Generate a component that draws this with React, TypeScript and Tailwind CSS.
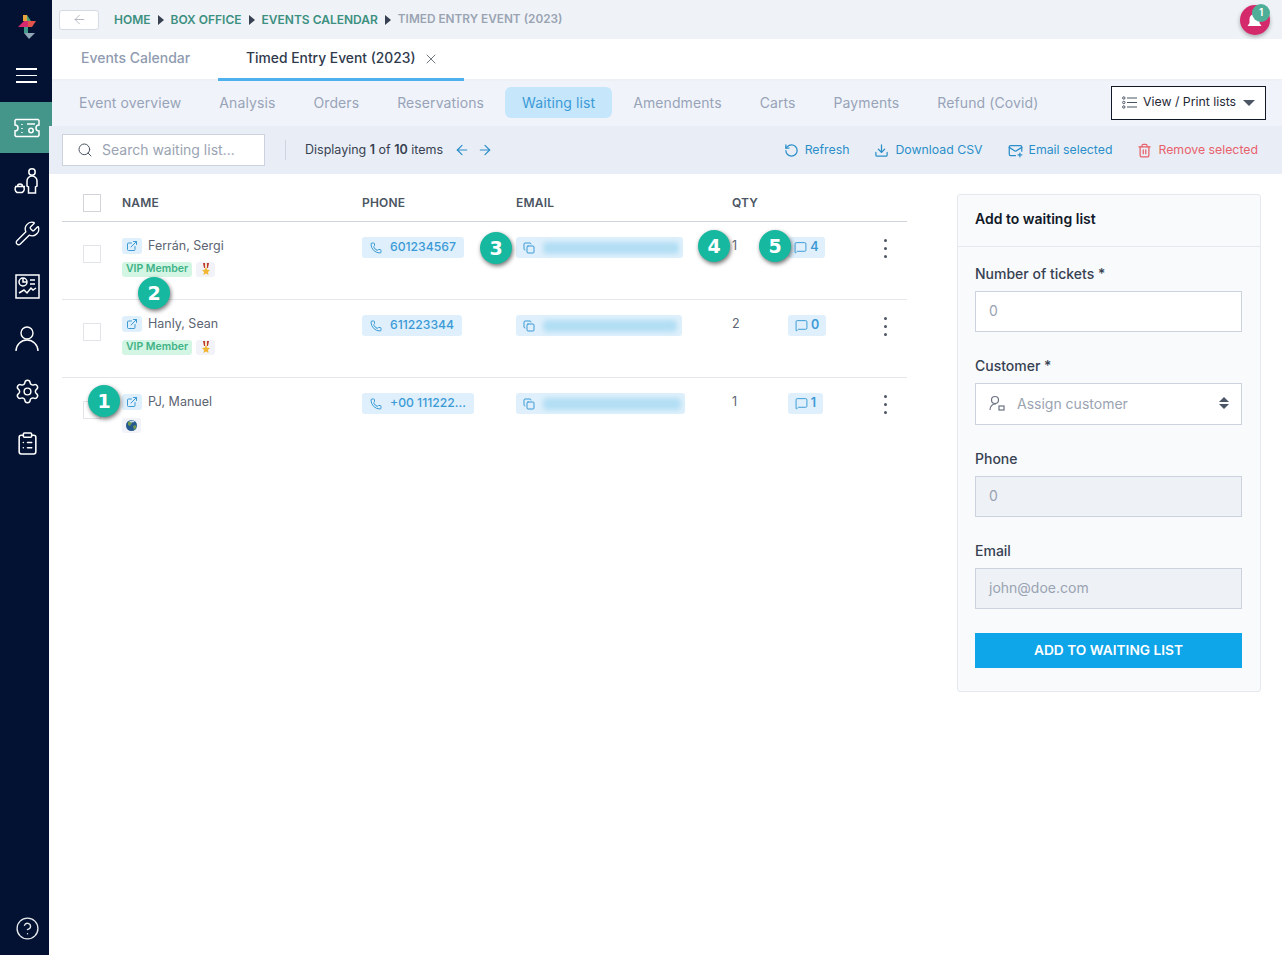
import {
    ArrowLeft, ArrowRight, CircleHelp, ClipboardList, Copy, Download, ExternalLink, MailPlus, MessageSquare,
    Phone, RotateCcw, Search, Settings, Trash2, Wrench, X,
} from "lucide-react";
import type {ReactNode} from "react";

const subTabs = ["Event overview", "Analysis", "Orders", "Reservations", "Waiting list", "Amendments", "Carts", "Payments", "Refund (Covid)"];

const rows = [
    {name: "Ferrán, Sergi", vip: true, phone: "601234567", blur: "w-[136px]", chip: "w-[167px]", qty: "1", notes: "4", noteChip: "w-[37px]"},
    {name: "Hanly, Sean", vip: true, phone: "611223344", blur: "w-[134px]", chip: "w-[166px]", qty: "2", notes: "0", noteChip: "w-[38px]"},
    {name: "PJ, Manuel", vip: false, phone: "+00 111222...", blur: "w-[138px]", chip: "w-[169px]", qty: "1", notes: "1", noteChip: "w-[35px]"},
];

function Logo() {
    return (
        <svg width="18" height="24" viewBox="0 0 18 24">
            <path d="M5 0h4v6H5z" fill="#e8a33d"/>
            <path d="M9 0l4 6H9z" fill="#4f9f6e"/>
            <path d="M0 12l6-6h4v6z" fill="#d6296f"/>
            <path d="M10 6h8l-4 6h-4z" fill="#e0524a"/>
            <path d="M6 12h4v6H6z" fill="#3f9a8a"/>
            <path d="M6 18h11l-6 6z" fill="#8fa6b5"/>
        </svg>
    );
}

function TicketIcon() {
    return (
        <svg width="26" height="20" viewBox="0 0 26 20" fill="none" stroke="white" strokeWidth="1.5">
            <path d="M2 1.500h22l1 1v4.500a3 3 0 0 0 0 6v4.500l-1 1h-22l-1-1v-4.500a3 3 0 0 0 0-6v-4.500z"/>
            <path d="M8 6v1M8 10v1M8 14v1M13 6h8"/>
            <circle cx="17" cy="12.500" r="2.200"/>
        </svg>
    );
}

function CustomerIcon() {
    return (
        <svg width="26" height="26" viewBox="0 0 26 26" fill="none" stroke="white" strokeWidth="1.500">
            <circle cx="18" cy="4" r="3.200"/>
            <path d="M14.500 25v-6l-1.500-1v-5a5 5 0 0 1 10 0v5l-1.500 1v6z"/>
            <path d="M1 18.500h10M2 18.500a4 4 0 0 0 1 6h5a4 4 0 0 0 1.500-6M3.500 18.500a2.500 2.500 0 0 1 5 0"/>
        </svg>
    );
}

function ReportIcon() {
    return (
        <svg width="25" height="25" viewBox="0 0 25 25" fill="none" stroke="white" strokeWidth="1.500">
            <rect x="1" y="1" width="23" height="23"/>
            <circle cx="8" cy="8" r="4"/>
            <path d="M8 4v4h4M15 6h5M15 10h5M4 19l5-3 3 3 4-5 2 2 3-2"/>
        </svg>
    );
}

function PersonIcon() {
    return (
        <svg width="24" height="26" viewBox="0 0 24 26" fill="none" stroke="white" strokeWidth="1.400">
            <circle cx="12" cy="7" r="6"/>
            <path d="M1 25a11 11 0 0 1 22 0"/>
        </svg>
    );
}

function AssignIcon() {
    return (
        <svg width="16" height="16" viewBox="0 0 16 16" fill="none" stroke="#6b7280" strokeWidth="1.200">
            <circle cx="6" cy="5" r="3.500"/>
            <path d="M1 15a5.500 5.500 0 0 1 6-6"/>
            <rect x="10" y="11" width="5" height="4"/>
        </svg>
    );
}

function Medal() {
    return (
        <svg width="10" height="12" viewBox="0 0 10 12">
            <path d="M2 0h6l-1 5H3z" fill="#c0392b"/>
            <path d="M4 0h2v5H4z" fill="#f0e4d0"/>
            <path d="M5 4l1.300 2.700 2.700.300-2 2 .5 3L5 10.500 2.500 12l.5-3-2-2 2.700-.300z" fill="#f2b632"/>
        </svg>
    );
}

function Globe() {
    return (
        <svg width="11" height="11" viewBox="0 0 11 11">
            <circle cx="5.500" cy="5.500" r="5.500" fill="#24598f"/>
            <path d="M2 2l3-1 1 2-2 3-2-1zM7 6l3-1 0 3-2 2z" fill="#6d9a4f"/>
            <path d="M3 1l4-.5 2 1.500-4 .5z" fill="#c8dbe6"/>
        </svg>
    );
}

function Marker({n, className}: {n: number; className: string}) {
    return (
        <div className={`absolute z-10 flex h-[32px] w-[32px] items-center justify-center rounded-full bg-[#17b8a0] font-['DejaVu_Sans',sans-serif] text-[19px] font-bold text-white shadow-[1px_2px_4px_rgba(0,0,0,0.55)] ${className}`}>
            {n}
        </div>
    );
}

function SideItem({children}: {children: ReactNode}) {
    return <div className="flex h-[52.500px] w-[49px] items-center justify-center pl-[5px]">{children}</div>;
}

function Crumb({label}: {label: string}) {
    return (
        <>
            <span>{label}</span>
            <span className="h-0 w-0 border-y-[5px] border-l-[6px] border-y-transparent border-l-[#374151]"/>
        </>
    );
}

function Action({icon, label, className}: {icon: ReactNode; label: string; className: string}) {
    return (
        <div className={`flex items-center gap-[6px] text-[12.300px] ${className}`}>
            {icon}
            {label}
        </div>
    );
}

function Field({label, value, disabled}: {label: string; value: string; disabled?: boolean}) {
    return (
        <div>
            <div className="mb-[10px] text-[14px] leading-[15px] font-medium text-[#374151]">{label}</div>
            <div className={`flex h-[41px] items-center border border-[#ccd3de] pb-[2px] pl-[13px] text-[14px] text-[#9aa3b2] ${disabled ? "bg-[#eef1f6]" : "bg-white"}`}>
                {value}
            </div>
        </div>
    );
}

export default function App() {
    return (
        <div className="flex h-[958px] w-[1282px] overflow-hidden bg-white font-[family-name:Inter,sans-serif]">
            {/* sidebar */}
            <div className="flex h-[955px] w-[49px] shrink-0 flex-col bg-[#031233]">
                <div className="flex h-[51px] w-[52px] items-center justify-center bg-[#031233] pl-[1px] pt-[2px]">
                    <Logo/>
                </div>
                <div className="flex h-[51px] w-[52px] flex-col items-center justify-center gap-[5px] bg-[#031233] pl-[1px] pb-[2px]">
                    <div className="h-[1.500px] w-[21px] bg-white"/>
                    <div className="h-[1.500px] w-[21px] bg-white"/>
                    <div className="h-[1.500px] w-[21px] bg-white"/>
                </div>
                <div className="flex h-[51px] w-[52px] items-center justify-center bg-[#45968a] pl-[1px]">
                    <TicketIcon/>
                </div>
                <div className="mt-[2px]">
                    <SideItem><CustomerIcon/></SideItem>
                    <SideItem><Wrench size={27} color="white" strokeWidth={1.2}/></SideItem>
                    <SideItem><ReportIcon/></SideItem>
                    <SideItem><PersonIcon/></SideItem>
                    <SideItem><Settings size={27} color="white" strokeWidth={1.3}/></SideItem>
                    <SideItem><ClipboardList size={25} color="white" strokeWidth={1.5}/></SideItem>
                </div>
                <div className="mt-auto flex h-[54px] items-center justify-center pl-[5px]">
                    <CircleHelp size={25} color="#e5e7eb" strokeWidth={1.3}/>
                </div>
            </div>

            <div className="flex min-w-0 flex-1 flex-col">
                {/* breadcrumb */}
                <div className="ml-[3px] flex h-[39px] items-center bg-[#eff3f8] pl-[7px] pr-[12px]">
                    <div className="flex h-[20px] w-[40px] items-center justify-center rounded-[3px] border border-[#d5dae3] bg-white">
                        <ArrowLeft size={15} color="#9ca3af" strokeWidth={1.2}/>
                    </div>
                    <div className="ml-[15px] flex items-center gap-[7px] pt-[1px] text-[12px] font-semibold text-[#3d8f80]">
                        <Crumb label="HOME"/>
                        <Crumb label="BOX OFFICE"/>
                        <Crumb label="EVENTS CALENDAR"/>
                        <span className="text-[11.800px] text-[#9aa3b2]">TIMED ENTRY EVENT (2023)</span>
                    </div>
                    <div className="relative ml-auto h-[30px] w-[30px] rounded-full bg-[#d42a6c] shadow-[0_2px_4px_rgba(0,0,0,0.3)]">
                        <svg className="absolute left-[7px] top-[9px]" width="15" height="16" viewBox="0 0 15 16" fill="white">
                            <path d="M7.500 0a5 5 0 0 1 5 5v4l2 3h-14l2-3v-4a5 5 0 0 1 5-5z"/>
                        </svg>
                        <div className="absolute left-[12px] top-[-1px] flex h-[18px] w-[18px] items-center justify-center rounded-full bg-[#4fae97] text-[10px] font-semibold text-white">1</div>
                    </div>
                </div>

                {/* page tabs */}
                <div className="ml-[3px] flex h-[42px] border-b-2 border-[#edf0f5] bg-white">
                    <div className="flex w-[166px] items-center pl-[29px] pb-[3px] text-[14px] font-medium text-[#8f9bb0]">Events Calendar</div>
                    <div className="-mb-[2px] flex w-[246px] items-center gap-[7px] border-b-[3px] border-[#4fb0ee] pl-[28px] text-[13.850px] font-medium text-[#2f3a4c]">
                        Timed Entry Event (2023)
                        <X size={16} color="#4b5563" strokeWidth={1.2}/>
                    </div>
                </div>

                {/* section tabs */}
                <div className="ml-[3px] flex h-[45px] items-center bg-[#f0f4fa] pb-[2px] pl-[10px] pr-[16px]">
                    <div className="flex items-center gap-[4px] text-[14px] tracking-[0.1px] text-[#98a3b8]">
                        {subTabs.map(tab => (
                            <div key={tab} className={tab === "Waiting list"
                                ? "rounded-md bg-[#c6e6fb] px-[17px] py-[5px] text-[#3b9ad6]"
                                : "px-[17px] py-[5px]"}>
                                {tab}
                            </div>
                        ))}
                    </div>
                    <div className="ml-auto flex h-[34px] w-[155px] items-center gap-[6px] border border-[#111827] bg-white pl-[10px] text-[12.300px] text-[#1f2937]">
                        <svg width="15" height="13" viewBox="0 0 15 13" fill="none" stroke="#4b5563" strokeWidth="1">
                            <circle cx="1.800" cy="2" r="1.200"/><circle cx="1.800" cy="6.500" r="1.200"/><circle cx="1.800" cy="11" r="1.200"/>
                            <path d="M5 2h10M5 6.500h10M5 11h10"/>
                        </svg>
                        View / Print lists
                        <span className="ml-[1px] h-0 w-0 border-x-[6px] border-t-[6px] border-x-transparent border-t-[#4b5563]"/>
                    </div>
                </div>

                {/* toolbar */}
                <div className="relative flex h-[48px] items-center bg-[#e9eef6] pl-[13px] pr-[24px]">
                    <div className="flex h-[32px] w-[203px] items-center gap-[9px] border border-[#ccd3de] bg-white pb-[1px] pl-[14px] text-[14px] text-[#9aa3b2]">
                        <Search size={16} color="#4b5563" strokeWidth={1.5}/>
                        Search waiting list...
                    </div>
                    <div className="ml-[20px] h-[20px] w-px bg-[#cdd4df]"/>
                    <div className="ml-[19px] text-[12.500px] text-[#374151]">
                        Displaying <b className="font-semibold">1</b> of <b className="font-semibold">10</b> items
                    </div>
                    <ArrowLeft size={16} color="#2b8ec9" strokeWidth={1.8} className="ml-[11px]"/>
                    <ArrowRight size={16} color="#2b8ec9" strokeWidth={1.8} className="ml-[7px]"/>
                    <div className="ml-auto flex items-center gap-[25px]">
                        <Action label="Refresh" className="text-[#2b8ec9]" icon={<RotateCcw size={15} strokeWidth={2}/>}/>
                        <Action label="Download CSV" className="text-[#2b8ec9]" icon={<Download size={15} strokeWidth={2}/>}/>
                        <Action label="Email selected" className="text-[#2b8ec9]" icon={<MailPlus size={15} strokeWidth={2}/>}/>
                        <Action label="Remove selected" className="text-[#e8616b]" icon={<Trash2 size={15} strokeWidth={2}/>}/>
                    </div>
                </div>

                <div className="flex flex-1 pl-[13px] pt-[8px]">
                    {/* waiting list table */}
                    <div className="w-[845px] shrink-0">
                        <div className="grid h-[40px] grid-cols-[60px_240px_154px_216px_56px_1fr] items-center border-b border-[#cfd4dc] pt-[2px] text-[12px] font-semibold tracking-[0.2px] text-[#4b5563]">
                            <div className="pl-[21px]"><div className="h-[18px] w-[18px] border border-[#d1d5db] bg-white"/></div>
                            <div>NAME</div>
                            <div>PHONE</div>
                            <div>EMAIL</div>
                            <div>QTY</div>
                        </div>
                        {rows.map((row, i) => (
                            <div key={row.name} className="grid h-[78px] grid-cols-[60px_240px_154px_216px_56px_1fr] border-b border-[#e5e7eb] last:border-b-0">
                                <div className="relative pl-[21px] pt-[23px]">
                                    <div className="h-[18px] w-[18px] border border-[#e1e4e9] bg-white"/>
                                    {i === 2 && <Marker n={1} className="left-[26px] top-[7px]"/>}
                                </div>
                                <div className="relative pt-[15px]">
                                    <div className="flex items-center gap-[6px] text-[12.500px] text-[#5b6472]">
                                        <span className="flex h-[16px] w-[20px] items-center justify-center rounded-[3px] bg-[#dff0fc]">
                                            <ExternalLink size={12} color="#3b9ad6" strokeWidth={2}/>
                                        </span>
                                        {row.name}
                                    </div>
                                    <div className="mt-[6px] flex items-center gap-[4px]">
                                        {row.vip && <span className="flex h-[15px] w-[70px] items-center justify-center rounded-[3px] bg-[#d3f6e4] text-[10.500px] font-semibold text-[#3fb287]">VIP Member</span>}
                                        <span className="flex h-[15px] w-[19px] items-center justify-center rounded-[3px] bg-[#f1f3f8]">
                                            {row.vip ? <Medal/> : <Globe/>}
                                        </span>
                                    </div>
                                    {i === 0 && <Marker n={2} className="left-[16px] top-[55px]"/>}
                                </div>
                                <div className="pt-[15px]">
                                    <span className="flex h-[21px] w-fit items-center gap-[8px] rounded-[3px] bg-[#dff0fc] px-[8px] text-[12.200px] font-medium text-[#3b9ad6]">
                                        <Phone size={12} strokeWidth={2}/>
                                        {row.phone}
                                    </span>
                                </div>
                                <div className="relative pt-[15px]">
                                    <span className={`flex h-[21px] items-center gap-[8px] rounded-[3px] bg-[#dff0fc] pl-[7px] ${row.chip}`}>
                                        <Copy size={12} color="#3b9ad6" strokeWidth={2}/>
                                        <span className={`h-[12px] rounded-sm bg-[#b2def4] blur-[2.500px] ${row.blur}`}/>
                                    </span>
                                    {i === 0 && <Marker n={3} className="left-[-36px] top-[10px]"/>}
                                </div>
                                <div className="relative pt-[15px] text-[12.500px] text-[#5b6472]">
                                    {row.qty}
                                    {i === 0 && <Marker n={4} className="left-[-34px] top-[8px]"/>}
                                </div>
                                <div className="relative flex items-start justify-between pr-[20px] pt-[15px]">
                                    <span className={`flex h-[21px] items-center justify-center gap-[3px] rounded-[3px] bg-[#dff0fc] text-[12.500px] font-semibold text-[#3b9ad6] ${row.noteChip}`}>
                                        <MessageSquare size={13} strokeWidth={1.8}/>
                                        {row.notes}
                                    </span>
                                    <div className="flex flex-col gap-[5px] pt-[2px]">
                                        <span className="h-[3px] w-[3px] rounded-full bg-[#4b5563]"/>
                                        <span className="h-[3px] w-[3px] rounded-full bg-[#4b5563]"/>
                                        <span className="h-[3px] w-[3px] rounded-full bg-[#4b5563]"/>
                                    </div>
                                    {i === 0 && <Marker n={5} className="left-[-29px] top-[8px]"/>}
                                </div>
                            </div>
                        ))}
                    </div>

                    {/* add to waiting list */}
                    <div className="ml-[50px] mt-[12px] h-[498px] w-[304px] rounded-[3px] border border-[#e5e9ef] bg-[#f8fafc]">
                        <div className="flex h-[52px] items-center border-b border-[#e5e9ef] pb-[4px] pl-[17px] text-[14px] font-semibold text-[#111827]">Add to waiting list</div>
                        <div className="flex flex-col gap-[26px] pl-[17px] pr-[18px] pt-[19px]">
                            <Field label="Number of tickets *" value="0"/>
                            <div>
                                <div className="mb-[10px] text-[14px] leading-[15px] font-medium text-[#374151]">Customer *</div>
                                <div className="flex h-[42px] items-center border border-[#ccd3de] bg-white pb-[2px] pl-[13px] pr-[12px] text-[14px] text-[#9aa3b2]">
                                    <AssignIcon/>
                                    <span className="ml-[12px]">Assign customer</span>
                                    <span className="ml-auto flex flex-col gap-[2px]">
                                        <span className="h-0 w-0 border-x-[5px] border-b-[5px] border-x-transparent border-b-[#4b5563]"/>
                                        <span className="h-0 w-0 border-x-[5px] border-t-[5px] border-x-transparent border-t-[#4b5563]"/>
                                    </span>
                                </div>
                            </div>
                            <Field label="Phone" value="0" disabled/>
                            <Field label="Email" value="john@doe.com" disabled/>
                        </div>
                        <div className="ml-[17px] mr-[18px] mt-[24px] flex h-[35px] items-center justify-center bg-[#0ea5e9] text-[13.700px] font-semibold text-white">ADD TO WAITING LIST</div>
                    </div>
                </div>
            </div>
        </div>
    );
}
